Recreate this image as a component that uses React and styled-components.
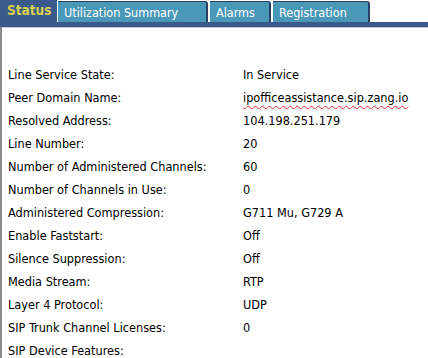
import styled, { createGlobalStyle } from "styled-components";

const Global = createGlobalStyle`
  html, body { margin: 0; padding: 0; background: #fff; }
  body { font-family: "DejaVu Sans Condensed", "DejaVu Sans", sans-serif; }
`;

const Page = styled.div`
  width: 428px;
  height: 358px;
  overflow: hidden;
  background: #fff;
`;

const TabBar = styled.div`
  display: flex;
  align-items: flex-end;
  height: 22px;
  border-bottom: 5px solid #3a5a8c;
  box-shadow: 0 1px 0 #c8c8c8;
`;

const Tab = styled.div`
  height: ${(p) => (p.active ? "27px" : "21px")};
  margin-bottom: ${(p) => (p.active ? "-5px" : "0")};
  align-self: ${(p) => (p.active ? "flex-start" : "flex-end")};
  padding: ${(p) => (p.active ? "2px 4px 0 7px" : "3px 0 0 6px")};
  width: ${(p) => p.w}px;
  box-sizing: border-box;
  background: ${(p) => (p.active ? "#3a5a8c" : "#4a98b8")};
  color: ${(p) => (p.active ? "#d9cf4e" : "#fff")};
  font-weight: ${(p) => (p.active ? "bold" : "normal")};
  font-size: ${(p) => (p.active ? "13.5px" : "12.5px")};
  border-right: ${(p) => (p.active ? "none" : "2px solid #2a3f66")};
  border-top: ${(p) => (p.active ? "none" : "1px solid #2a3f66")};
  border-top-right-radius: ${(p) => (p.active ? "0" : "3px")};
  margin-right: ${(p) => (p.active ? "1px" : "2px")};
  white-space: nowrap;
`;

const Body = styled.div`
  border-left: 2px solid #8a8a8a;
  padding: 40px 0 0 6px;
  height: 400px;
`;

const Row = styled.div`
  display: grid;
  grid-template-columns: 235px 1fr;
  height: 23px;
  font-size: 12.6px;
  color: #000;
  white-space: nowrap;
`;

const Value = styled.span`
  ${(p) =>
    p.spell &&
    `text-decoration: underline wavy #e03030; text-decoration-thickness: 1px; text-underline-offset: 3px;`}
`;

const rows = [
  ["Line Service State:", "In Service"],
  ["Peer Domain Name:", "ipofficeassistance.sip.zang.io", true],
  ["Resolved Address:", "104.198.251.179"],
  ["Line Number:", "20"],
  ["Number of Administered Channels:", "60"],
  ["Number of Channels in Use:", "0"],
  ["Administered Compression:", "G711 Mu, G729 A"],
  ["Enable Faststart:", "Off"],
  ["Silence Suppression:", "Off"],
  ["Media Stream:", "RTP"],
  ["Layer 4 Protocol:", "UDP"],
  ["SIP Trunk Channel Licenses:", "0"],
  ["SIP Device Features:", ""],
];

export default function App() {
  return (
    <Page>
      <Global />
      <TabBar>
        <Tab active w={57}>Status</Tab>
        <Tab w={150}>Utilization Summary</Tab>
        <Tab w={61}>Alarms</Tab>
        <Tab w={97}>Registration</Tab>
      </TabBar>
      <Body>
        {rows.map(([k, v, s]) => (
          <Row key={k}>
            <span>{k}</span>
            <Value spell={s}>{v}</Value>
          </Row>
        ))}
      </Body>
    </Page>
  );
}
